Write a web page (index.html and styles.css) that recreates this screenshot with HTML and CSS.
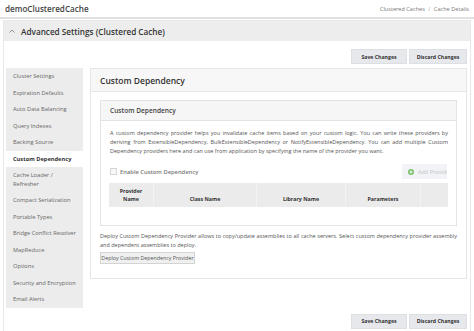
FILE: index.html
```html
<!DOCTYPE html>
<html lang="en">
<head>
    <meta charset="UTF-8">
    <meta name="viewport" content="width=device-width, initial-scale=1.0">
    <title>demoClusteredCache - Advanced Settings</title>
    <link rel="stylesheet" href="styles.css">
</head>
<body>
    <header class="topbar">
        <div class="app-title">demoClusteredCache</div>
        <div class="breadcrumb">Clustered Caches <span class="sep">/</span> Cache Details</div>
    </header>

    <section class="settings">
        <div class="settings-head">
            <svg class="chevron" width="6" height="4" viewBox="0 0 6 4"><polyline points="0.5,3.5 3,1 5.5,3.5" fill="none" stroke="#888" stroke-width="0.9"/></svg>
            <span>Advanced Settings (Clustered Cache)</span>
        </div>

        <div class="actions">
            <button class="btn save-btn">Save Changes</button>
            <button class="btn discard-btn">Discard Changes</button>
        </div>

        <div class="settings-body">
            <nav class="side-menu">
                <a class="menu-item">Cluster Settings</a>
                <a class="menu-item">Expiration Defaults</a>
                <a class="menu-item">Auto Data Balancing</a>
                <a class="menu-item">Query Indexes</a>
                <a class="menu-item">Backing Source</a>
                <a class="menu-item active">Custom Dependency</a>
                <a class="menu-item">Cache Loader /<br>Refresher</a>
                <a class="menu-item">Compact Serialization</a>
                <a class="menu-item">Portable Types</a>
                <a class="menu-item">Bridge Conflict Resolver</a>
                <a class="menu-item">MapReduce</a>
                <a class="menu-item">Options</a>
                <a class="menu-item">Security and Encryption</a>
                <a class="menu-item">Email Alerts</a>
            </nav>

            <div class="panel">
                <div class="panel-head">Custom Dependency</div>
                <div class="panel-body">
                    <div class="inner-panel">
                        <div class="inner-head">Custom Dependency</div>
                        <div class="inner-body">
                            <p class="desc">
                                <span class="line">A custom dependency provider helps you invalidate cache items based on your custom logic. You can write these providers by</span>
                                <span class="line">deriving from ExtensibleDependency, BulkExtensibleDependency or NotifyExtensibleDependency. You can add multiple Custom</span>
                                <span class="last">Dependency providers here and can use from application by specifying the name of the provider you want.</span>
                            </p>

                            <div class="option-row">
                                <label class="check-label">
                                    <span class="checkbox"></span>
                                    Enable Custom Dependency
                                </label>
                                <button class="add-btn" disabled>
                                    <svg width="6" height="6" viewBox="0 0 12 12"><circle cx="6" cy="6" r="6" fill="#7cbf6b"/><path d="M6 3v6M3 6h6" stroke="#fff" stroke-width="1.8"/></svg>
                                    Add Provider
                                </button>
                            </div>

                            <table class="provider-table">
                                <thead>
                                    <tr>
                                        <th class="col-provider">Provider<br>Name</th>
                                        <th class="col-class">Class Name</th>
                                        <th class="col-library">Library Name</th>
                                        <th class="col-params">Parameters</th>
                                        <th class="col-actions"></th>
                                    </tr>
                                </thead>
                                <tbody></tbody>
                            </table>
                        </div>
                    </div>

                    <p class="deploy-text">
                        <span class="line">Deploy Custom Dependency Provider allows to copy/update assemblies to all cache servers. Select custom dependency provider assembly</span>
                        <span class="last">and dependent assemblies to deploy.</span>
                    </p>
                    <button class="deploy-btn">Deploy Custom Dependency Provider</button>
                </div>
            </div>
        </div>

        <div class="actions bottom">
            <button class="btn save-btn">Save Changes</button>
            <button class="btn discard-btn">Discard Changes</button>
        </div>
    </section>
</body>
</html>
```

FILE: styles.css
```css
body {
    margin: 0;
    font-family: 'Open Sans', sans-serif;
    color: #333;
    background-color: #fff;
}

.topbar {
    display: flex;
    justify-content: space-between;
    align-items: center;
    height: 17px;
    padding: 0 5px;
    border-bottom: 2px solid #e0e0e0;
}

.app-title {
    font-size: 8.1px;
    font-weight: 600;
    color: #444;
}

.breadcrumb {
    font-size: 5.6px;
    color: #777;
}

.breadcrumb .sep {
    margin: 0 2px;
    color: #999;
}

.settings {
    margin: 1px 3px 0;
    border: 1px solid #e8e8e8;
}

.settings-head {
    display: flex;
    align-items: center;
    gap: 6px;
    height: 20px;
    padding-left: 5px;
    background-color: #ededed;
    font-size: 8.2px;
    font-weight: 600;
    color: #333;
}

.actions {
    display: flex;
    justify-content: flex-end;
    gap: 2px;
    padding: 8px 3px 4px;
}

.actions.bottom {
    padding-top: 6px;
}

.btn {
    height: 15px;
    padding: 0;
    border: 1px solid #dde0e3;
    background-color: #e6e8eb;
    font-family: inherit;
    font-size: 5.2px;
    font-weight: 700;
    color: #333;
}

.save-btn {
    width: 56px;
}

.discard-btn {
    width: 58px;
}

.settings-body {
    display: flex;
    align-items: flex-start;
    gap: 7px;
    padding: 0 3px 0 2px;
}

.side-menu {
    width: 77px;
    flex-shrink: 0;
    background-color: #ececec;
}

.menu-item {
    display: block;
    padding: 4px 7px;
    font-size: 5.7px;
    line-height: 8.5px;
    color: #666;
}

.menu-item.active {
    background-color: #fff;
    font-weight: 700;
    color: #333;
}

.panel {
    flex: 1;
    border: 1px solid #e6e6e6;
}

.panel-head {
    display: flex;
    align-items: center;
    height: 22px;
    padding-left: 9px;
    border-bottom: 1px solid #e6e6e6;
    background-color: #f7f7f7;
    font-size: 8.5px;
    font-weight: 600;
    color: #333;
}

.panel-body {
    padding: 8px 9px 14px;
}

.inner-panel {
    border: 1px solid #e3e3e3;
}

.inner-head {
    display: flex;
    align-items: center;
    height: 19px;
    padding-left: 9px;
    border-bottom: 1px solid #e3e3e3;
    background-color: #f6f6f6;
    font-size: 6.6px;
    font-weight: 600;
    color: #444;
}

.inner-body {
    padding: 8px 8px 18px 9px;
}

.desc,
.deploy-text {
    margin: 0;
    font-size: 5.5px;
    line-height: 9px;
    color: #555;
}

.line {
    display: block;
    text-align: justify;
    text-align-last: justify;
}

.last {
    display: block;
}

.option-row {
    display: flex;
    justify-content: space-between;
    align-items: center;
    margin-top: 8px;
    padding-right: 1px;
}

.check-label {
    display: flex;
    align-items: center;
    gap: 3px;
    font-size: 5.8px;
    font-weight: 600;
    color: #777;
}

.checkbox {
    width: 5px;
    height: 5px;
    border: 1px solid #d6d6d6;
    background-color: #f7f7f7;
}

.add-btn {
    display: flex;
    align-items: center;
    gap: 4px;
    width: 45px;
    height: 15px;
    padding: 0 0 0 6px;
    overflow: hidden;
    white-space: nowrap;
    border: none;
    background-color: #f1f3f6;
    font-family: inherit;
    font-size: 5.5px;
    color: #c4c4c4;
}

.add-btn svg {
    flex-shrink: 0;
}

.provider-table {
    width: calc(100% + 1px);
    margin: 4px 0 0 -1px;
    border-collapse: collapse;
    table-layout: fixed;
}

.provider-table th {
    height: 20px;
    padding: 0 0 4px;
    vertical-align: bottom;
    border-right: 1px solid #f3f3f3;
    background-color: #ebebeb;
    font-size: 5.3px;
    font-weight: 700;
    line-height: 8px;
    color: #333;
}

.provider-table th:last-child {
    border-right: none;
}

.col-provider { width: 44px; }
.col-class { width: 102px; }
.col-library { width: 88px; }
.col-params { width: 74px; }

.deploy-text {
    margin-top: 6px;
    line-height: 8.5px;
}

.deploy-btn {
    display: block;
    width: 95px;
    height: 12px;
    margin-top: 3px;
    padding: 0;
    border: 1px solid #d4d4d4;
    background-color: #f0f0f0;
    font-family: inherit;
    font-size: 5.3px;
    color: #555;
}
```
